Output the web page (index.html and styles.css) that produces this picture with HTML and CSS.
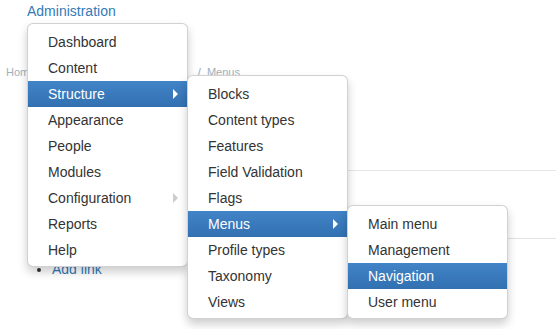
FILE: index.html
```html
<!DOCTYPE html>
<html>
<head>
<meta charset="utf-8">
<link rel="stylesheet" href="styles.css">
</head>
<body>
<header class="toolbar">
  <a class="admin-link" href="#">Administration</a>
  <ul class="dropdown">
    <li><a href="#">Dashboard</a></li>
    <li><a href="#">Content</a></li>
    <li class="sub open"><a href="#">Structure</a>
      <ul class="dropdown">
        <li><a href="#">Blocks</a></li>
        <li><a href="#">Content types</a></li>
        <li><a href="#">Features</a></li>
        <li><a href="#">Field Validation</a></li>
        <li><a href="#">Flags</a></li>
        <li class="sub open"><a href="#">Menus</a>
          <ul class="dropdown">
            <li><a href="#">Main menu</a></li>
            <li><a href="#">Management</a></li>
            <li class="active"><a href="#">Navigation</a></li>
            <li><a href="#">User menu</a></li>
          </ul>
        </li>
        <li><a href="#">Profile types</a></li>
        <li><a href="#">Taxonomy</a></li>
        <li><a href="#">Views</a></li>
      </ul>
    </li>
    <li><a href="#">Appearance</a></li>
    <li><a href="#">People</a></li>
    <li><a href="#">Modules</a></li>
    <li class="sub"><a href="#">Configuration</a></li>
    <li><a href="#">Reports</a></li>
    <li><a href="#">Help</a></li>
  </ul>
</header>
<nav class="breadcrumb">
  <span>Home</span><span class="sep">/</span><span>Administration</span><span class="sep">/</span><span>Structure</span><span class="sep">/</span><span>Menus</span>
</nav>
<section class="panel">
  <div class="table-box"></div>
</section>
<ul class="links">
  <li><a href="#">Add link</a></li>
</ul>
</body>
</html>
```
FILE: styles.css
```css
html, body {
  margin: 0;
  padding: 0;
  background: #fff;
}
html {
  min-height: 329px;
}
body {
  min-height: 329px;
  font-family: "Liberation Sans", Arial, Helvetica, sans-serif;
  font-size: 14px;
  line-height: 20px;
  color: #333;
}
a {
  text-decoration: none;
}
.toolbar {
  position: relative;
  height: 21px;
  padding: 1px 0 0 27px;
  box-sizing: border-box;
}
.admin-link {
  color: #337ab7;
  font-size: 14px;
  line-height: 20px;
}
.dropdown {
  list-style: none;
  margin: 0;
  padding: 5px 0 3px;
  width: 161px;
  box-sizing: border-box;
  background: #fff;
  border: 1px solid rgba(0, 0, 0, 0.18);
  border-radius: 6px;
  box-shadow: 0 5px 10px rgba(0, 0, 0, 0.2);
  position: absolute;
  z-index: 10;
}
.toolbar > .dropdown {
  top: 23px;
  left: 27px;
}
.dropdown li {
  position: relative;
}
.dropdown li > a {
  display: block;
  padding: 3px 20px;
  line-height: 20px;
  color: #333;
  white-space: nowrap;
}
.dropdown li .dropdown {
  top: -6px;
  left: 100%;
}
.dropdown li.sub > a::after {
  content: "";
  float: right;
  width: 0;
  height: 0;
  margin-top: 5px;
  margin-right: -11px;
  border-style: solid;
  border-width: 5px 0 5px 5px;
  border-color: transparent transparent transparent #ccc;
}
.dropdown li.open > a,
.dropdown li.active > a {
  color: #fff;
  background: linear-gradient(to bottom, #4184c7 0%, #3270b1 100%);
}
.dropdown li.open > a::after {
  border-left-color: #fff;
}
.breadcrumb {
  display: flex;
  margin-top: 43px;
  padding-left: 6px;
  font-size: 11px;
  line-height: 16px;
  color: #9db1bd;
}
.breadcrumb .sep {
  padding: 0 6px 0 10px;
  color: #8ea5b5;
}
.panel {
  margin: 90px 0 0 30px;
  padding: 12px 0 15px;
  border-top: 1px solid #e6e6e6;
  border-bottom: 1px solid #e2e2e2;
}
.table-box {
  margin-left: -3px;
  width: 290px;
  height: 38px;
  border: 1px solid #dedede;
  border-radius: 4px;
}
.links {
  margin: 20px 0 0;
  padding-left: 52px;
  list-style: disc;
  line-height: 20px;
}
.links a {
  color: #337ab7;
}
```
